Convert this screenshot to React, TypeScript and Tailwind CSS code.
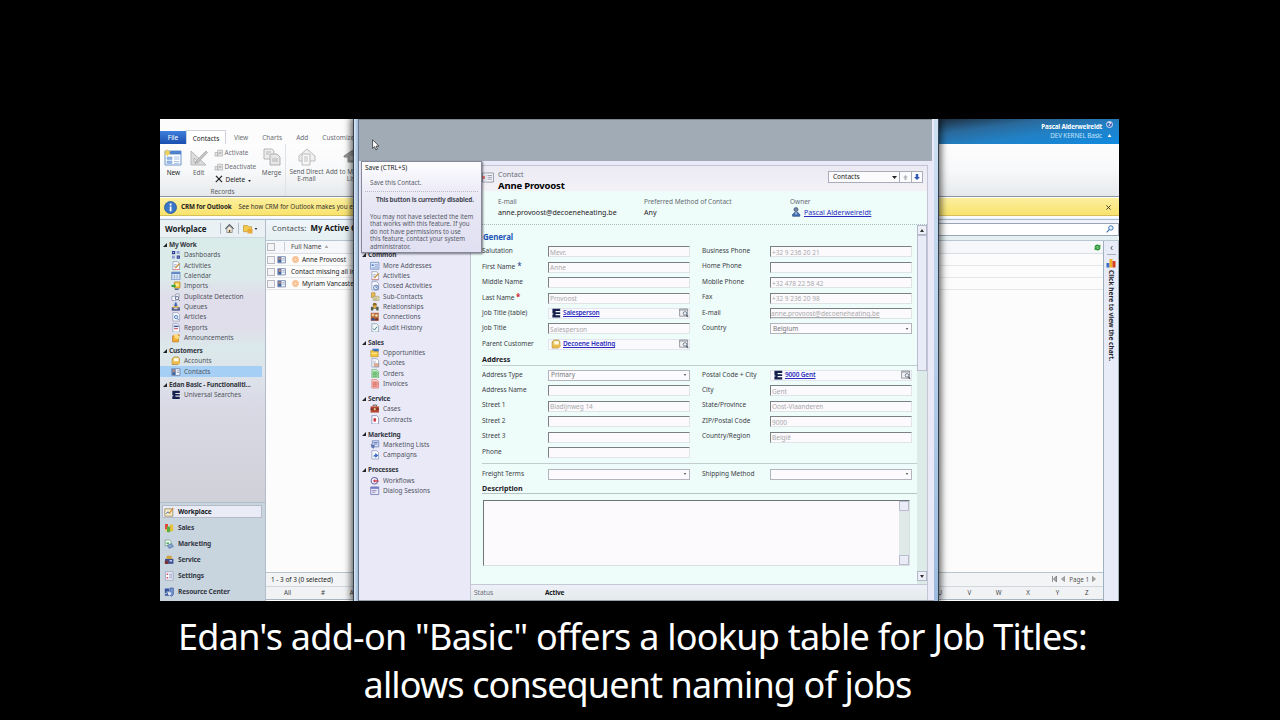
import React from "react";

type Nav = [string, string];

const sheet = (extra: React.ReactNode, fill = "#fdfdff", stroke = "#8090b0") => (
  <>
    <path d="M2 .7h5l2 2v6.8H2z" fill={fill} stroke={stroke} strokeWidth=".7" />
    {extra}
  </>
);

const ICONS: Record<string, React.ReactNode> = {
  dashboards: (
    <>
      <path d="M1 1h3.4v3.4H1zM6 5.8h3.4v3.4H6z" fill="#34439a" />
      <path d="M6 1h3v3H6zM1 6h3v3H1z" fill="#8d9bd8" />
      <path d="M2 2h1v1H2zM7 7h1v1H7z" fill="#fff" />
    </>
  ),
  activities: sheet(
    <>
      <path d="M3 4h3M3 6h2" stroke="#6c7fa5" strokeWidth=".7" />
      <path d="M4.5 7.5L9 2.6" stroke="#c98b2f" strokeWidth="1.3" />
      <path d="M2 9h7" stroke="#d66" strokeWidth=".7" />
    </>
  ),
  calendar: (
    <>
      <path d="M.8 1.2h8.6v8H.8z" fill="#f4f8ff" stroke="#5a7cb8" strokeWidth=".8" />
      <path d="M.8 1.2h8.6v2H.8z" fill="#5c85c6" />
      <path d="M1 5.2h8M1 7.2h8M3.6 3v6M6.4 3v6" stroke="#7e9bcc" strokeWidth=".6" />
    </>
  ),
  imports: (
    <>
      <path d="M3.5 1h6v6.5h-6z" fill="#f2c23c" stroke="#a87716" strokeWidth=".6" />
      <path d="M5 2.5h3v3H5z" fill="#ffe998" />
      <path d="M.5 4.2h2.6V2.8l2.2 2.4L3.1 7.6V6.2H.5z" fill="#3aa43a" />
      <path d="M4 8h4v1.4H4z" fill="#48598d" />
    </>
  ),
  duplicate: (
    <>
      <path d="M1 4.5h4V9H1zM5 2h3.5v4H5z" fill="#f6f7fd" stroke="#7c86a5" strokeWidth=".7" />
      <circle cx="6.4" cy="6.4" r="1.8" fill="#e3ecf8" stroke="#56637f" strokeWidth=".8" />
      <path d="M7.6 7.8L9.4 9.5" stroke="#56637f" />
    </>
  ),
  queues: (
    <>
      <path d="M.8 5.5h8.6v3.7H.8z" fill="#58648c" />
      <path d="M2.2 4h5.6v2H2.2z" fill="#f1c258" />
      <path d="M4 .6h2v2.2h1.4L5 5 2.6 2.8H4z" fill="#3765be" />
      <path d="M3.3 6.5h3.5v1H3.3z" fill="#e3e7f6" />
    </>
  ),
  articles: sheet(
    <>
      <circle cx="5.4" cy="5.3" r="1.8" fill="#cfe4fa" stroke="#3b6bb2" strokeWidth=".8" />
      <path d="M6.6 6.8L8 8.4" stroke="#3b6bb2" />
    </>
  ),
  reports: sheet(
    <>
      <path d="M3 3.5h5" stroke="#4558a8" strokeWidth="1.6" />
      <path d="M3.3 6h4" stroke="#c44458" strokeWidth="1.1" />
    </>
  ),
  announcements: (
    <>
      <path d="M1.6 3h6.8l-.7 6.4H1.6z" fill="#f1ab34" stroke="#b5741a" strokeWidth=".6" />
      <path d="M3 1.2l5.8.5-.7 4.6-4-.6z" fill="#ffdc7a" />
      <path d="M7.6.5l1.9 1.8-1.6 1z" fill="#d4792b" />
    </>
  ),
  accounts: (
    <>
      <path d="M1.2 2.8L3.4 1h4.2l1.2 1.7v5L7 9H1.2z" fill="#f2ce68" stroke="#a27c28" strokeWidth=".7" />
      <path d="M3.4 2.2h4.4v3.2H3.4z" fill="#fffbe6" />
      <path d="M1.5 6h6.2l1.6-1.2v3.4H1.5z" fill="#edba48" />
    </>
  ),
  contacts: (
    <>
      <path d="M.8 1.8h8.6v7H.8z" fill="#f5f8ff" stroke="#60749d" strokeWidth=".8" />
      <path d="M1.3 2.4h3.6v6H1.3z" fill="#41649c" />
      <circle cx="3.1" cy="4.3" r="1.2" fill="#d98c6a" />
      <path d="M6 4h2.6M6 5.8h2.6" stroke="#6e83ae" strokeWidth=".7" />
    </>
  ),
  edan: <path d="M1.4.8h7.8v2.3H4.6v1.2h4.6v1.6H4.6v1.3h4.6v2.3H1.4V6.6h1V5.5h-1z" fill="#16204e" />,
  addresses: (
    <>
      <path d="M.6 1.5h8.8v7.2H.6z" fill="#dbe7fb" stroke="#6e8cc7" strokeWidth=".8" />
      <path d="M1.8 3.5h2v1.8h-2z" fill="#5a7cc6" />
      <path d="M4.8 3.8h3.6M4.8 5.4h3.6M2 7.2h6.3" stroke="#7892c6" strokeWidth=".7" />
    </>
  ),
  closed: sheet(
    <>
      <circle cx="6.2" cy="6.8" r="2.5" fill="#edf3ff" stroke="#31549c" strokeWidth=".8" />
      <path d="M6.2 5.2v1.7h1.4" stroke="#31549c" fill="none" strokeWidth=".7" />
    </>
  ),
  sub: (
    <>
      <path d="M1.5.8h3.8v5H1.5z" fill="#e9bd52" stroke="#a57b29" strokeWidth=".6" />
      <path d="M3.3 4.6h6v4.3h-6z" fill="#f7ebb6" stroke="#8b8b5a" strokeWidth=".6" />
      <path d="M4.4 6.3h3.8M4.4 7.6h3" stroke="#7c7c67" strokeWidth=".6" />
    </>
  ),
  relationships: (
    <>
      <circle cx="5" cy="3" r="2.2" fill="#8c6a2c" />
      <path d="M1 5h8v4H6.6V7H3.4v2H1z" fill="#53604b" />
      <path d="M3.5 3.5h3v3h-3z" fill="#e0ab3d" />
    </>
  ),
  connections: (
    <>
      <path d="M.8.8h8.4v8.4H.8z" fill="#b0683a" />
      <circle cx="3.2" cy="3.2" r="1.5" fill="#f4c79c" />
      <circle cx="6.8" cy="3.8" r="1.5" fill="#f2d7a0" />
      <path d="M1.2 9c0-3.5 3.9-3.5 3.9 0z" fill="#314a8a" />
      <path d="M5.2 9c0-3.3 3.6-3.3 3.6 0z" fill="#703030" />
    </>
  ),
  audit: sheet(<path d="M3.3 5.8l1.4 1.6 2.8-3.6" stroke="#4f7389" strokeWidth="1" fill="none" />, "#eef7f8", "#7b949e"),
  opportunities: (
    <>
      <path d="M2.6.8h6.6v3H2.6z" fill="#3d74c3" />
      <path d="M.8 2.8h3l.8 1h4v5.4H.8z" fill="#f4c73e" stroke="#b8891d" strokeWidth=".6" />
      <path d="M1.6 5h6v1.2h-6z" fill="#ffeb97" />
    </>
  ),
  quotes: sheet(
    <>
      <path d="M3 3.4h3.4M3 5h3" stroke="#999eb0" strokeWidth=".6" />
      <path d="M4.4 6h4.8v3H4.4z" fill="#e7b49b" stroke="#9f7f76" strokeWidth=".6" />
    </>
  ),
  orders: sheet(
    <>
      <path d="M3.2 3h4.4v5.2H3.2z" fill="#9fdca2" stroke="#3d9f48" strokeWidth=".6" />
      <path d="M5.3 3v5M3.2 5.4h4.4" stroke="#3d9f48" strokeWidth=".6" />
    </>,
    "#dcf5dc",
    "#4daa55"
  ),
  invoices: sheet(
    <>
      <path d="M3.2 3h4.4v5.2H3.2z" fill="#f3b0a7" stroke="#d05046" strokeWidth=".6" />
      <path d="M5.3 3v5M3.2 5.4h4.4" stroke="#d05046" strokeWidth=".6" />
    </>,
    "#fde2de",
    "#d6645a"
  ),
  cases: (
    <>
      <path d="M3.3 2.6V1.2h3.6v1.4" stroke="#65493d" fill="none" />
      <path d="M.6 2.6h8.8V9H.6z" fill="#b5452f" />
      <path d="M.6 4.8h8.8v1.3H.6z" fill="#6b2e27" />
      <path d="M4 4.4h2v2H4z" fill="#e9c98c" />
    </>
  ),
  contracts: sheet(<path d="M3.6 3.4h2.8v2.8L5 7.4 3.6 6.2z" fill="#d03a48" />, "#fff", "#7479a8"),
  lists: (
    <>
      <path d="M2.4.8h6.8v6.4H2.4z" fill="#dce4fa" stroke="#536cae" strokeWidth=".7" />
      <path d="M3.6 2.6h4.4M3.6 4.2h4.4" stroke="#4b63a8" strokeWidth=".8" />
      <path d="M.6 4.4l4.6 1.2L4 9.2 1.6 8z" fill="#6577b1" />
    </>
  ),
  campaigns: sheet(<path d="M3 6.6l2.6-2V3.2L9 5.7 5.6 8.4V7z" fill="#3f6fc5" />),
  workflows: (
    <>
      <circle cx="4.6" cy="5" r="3.4" fill="#f5f3ff" stroke="#6a6aa5" strokeWidth="1.1" />
      <path d="M3 5.2l2.4-2v1.2H9v1.6H5.4v1.2z" fill="#cc4251" />
    </>
  ),
  dialogs: (
    <>
      <path d="M.8 1h8.4v8H.8z" fill="#e7eafa" stroke="#6b6ca9" strokeWidth=".8" />
      <path d="M.8 1h8.4v2H.8z" fill="#737cc2" />
      <path d="M2.2 4.8h4.6M2.2 6.6h3.4" stroke="#8f6fa0" strokeWidth=".8" />
    </>
  ),
  workplace: (
    <>
      <path d="M.8 1.8h8v7.4h-8z" fill="#f6ecc8" stroke="#887a4f" strokeWidth=".7" />
      <path d="M2 6.8l2-2 1.4 1.4" stroke="#3e69b4" fill="none" />
      <path d="M5.2 6.6L9.2 1" stroke="#d58c2c" strokeWidth="1.2" />
    </>
  ),
  sales: (
    <>
      <path d="M1 1h3v5.5H1z" fill="#e04b38" />
      <path d="M5.8 1.6h3.4v6.6H5.8z" fill="#eac13a" />
      <path d="M3 3.6h3.2v5.6H3z" fill="#5aab42" />
      <path d="M1 6.5h2v1.8H1z" fill="#f0d560" />
    </>
  ),
  marketing: (
    <>
      <path d="M1.2 1h4.4l1.6 1.8v4H1.2z" fill="#f2fbf4" stroke="#65967c" strokeWidth=".7" />
      <path d="M2.4 3.4h2.8v1.8H2.4z" fill="#57ac66" />
      <path d="M3.4 6.4l4-1.8 2 3-4.2 1.8z" fill="#86a4d4" stroke="#47679b" strokeWidth=".6" />
    </>
  ),
  service: (
    <>
      <path d="M3 .8h4.2l1.6 3.6H2z" fill="#d1a443" />
      <path d="M1 4h8.4v4.8H1z" fill="#3a4f94" />
      <path d="M.8 5.8h3.6V9H.8z" fill="#7b3335" />
      <path d="M5.6 5h2.4v1.6H5.6z" fill="#c6d1f2" />
    </>
  ),
  settings: (
    <>
      <path d="M1.4.8h7.6v8.4H1.4z" fill="#fbfbff" stroke="#8a91b6" strokeWidth=".7" />
      <path d="M2.6 2.4h1.6v1.6H2.6zM2.6 6h1.6v1.6H2.6z" fill="#cf4b5c" />
      <path d="M5.2 3.2h2.8M5.2 5h2.8M5.2 6.8h2.8" stroke="#6e7db2" strokeWidth=".8" />
    </>
  ),
  resource: (
    <>
      <path d="M.8 1.4h4.4v3.2H2.6v1.2h2.6v3H.8V7.2h2.4v-1H.8z" fill="#35549e" />
      <path d="M6 1h3.4v6.4L7.6 9.4 5.8 8z" fill="#7393cf" stroke="#2f4f95" strokeWidth=".6" />
      <path d="M4 5.4h3v2.4H4z" fill="#e5eefc" />
    </>
  ),
  star: (
    <>
      <circle cx="5" cy="5" r="3.8" fill="#f9c79c" />
      <circle cx="5" cy="5" r="1.8" fill="#fde3c8" stroke="#efa873" strokeWidth=".7" />
    </>
  ),
  person: (
    <>
      <circle cx="5" cy="2.6" r="2" fill="#6f87a8" stroke="#33486b" strokeWidth=".7" />
      <path d="M1.6 9.2V7.4l2-1.9h3.2l2 1.9v1.8z" fill="#4473b8" stroke="#26457c" strokeWidth=".7" />
      <path d="M4.3 5.5h1.5L5 8z" fill="#fff" />
    </>
  ),
  lookup: (
    <>
      <path d="M.6 1h8v7.2h-8z" fill="#f1f1f4" stroke="#80858f" strokeWidth=".8" />
      <path d="M.6 2h8" stroke="#80858f" strokeWidth=".8" />
      <circle cx="6" cy="5.4" r="1.8" fill="#e8f0fb" stroke="#666c7a" strokeWidth=".8" />
      <path d="M7.2 6.8l2 2.2" stroke="#444b5c" strokeWidth="1.1" />
    </>
  ),
};

function Icon({ name, size = 10 }: { name: string; size?: number }) {
  return (
    <svg viewBox="0 0 10 10" width={size} height={size} className="shrink-0">
      {ICONS[name]}
    </svg>
  );
}

function Twisty() {
  return (
    <svg viewBox="0 0 5 5" className="mr-[2px] h-[4px] w-[4px] shrink-0">
      <path d="M5 0v5H0z" fill="#222" />
    </svg>
  );
}

function Group({ title, items, selected, className = "" }: { title: string; items: Nav[]; selected?: string; className?: string }) {
  return (
    <div className={className}>
      <div className="flex h-[10.35px] items-center pl-[3px] text-[6.5px] font-bold tracking-[-0.16px] text-[#33363f]">
        <Twisty />
        {title}
      </div>
      {items.map(([icon, label]) => (
        <div
          key={label}
          className={
            label === selected
              ? "mr-[3px] flex h-[10.35px] items-center gap-[3.5px] bg-[#a6cff5] pl-[11px]"
              : "flex h-[10.35px] items-center gap-[3.5px] pl-[11px]"
          }
        >
          <Icon name={icon} size={9.5} />
          <span>{label}</span>
        </div>
      ))}
    </div>
  );
}

const WORK: Nav[] = [
  ["dashboards", "Dashboards"],
  ["activities", "Activities"],
  ["calendar", "Calendar"],
  ["imports", "Imports"],
  ["duplicate", "Duplicate Detection"],
  ["queues", "Queues"],
  ["articles", "Articles"],
  ["reports", "Reports"],
  ["announcements", "Announcements"],
];

const AREAS: Nav[] = [
  ["workplace", "Workplace"],
  ["sales", "Sales"],
  ["marketing", "Marketing"],
  ["service", "Service"],
  ["settings", "Settings"],
  ["resource", "Resource Center"],
];

function Ribbon() {
  return (
    <div className="flex h-[53px] shrink-0 border-b border-[#8e949c] bg-linear-to-b from-[#fdfdfe] via-[#f8f9fa] to-[#e6e9ec] text-center text-[6.4px] leading-[7px] text-[#5a5d63]">
      <div className="flex w-[126px] flex-col border-r border-[#e0e3e6]">
        <div className="flex h-[43px]">
          <div className="flex w-[27px] flex-col items-center pt-[5px]">
            <svg viewBox="0 0 18 18" className="mb-[2px] h-[18px] w-[18px]">
              <path d="M1 2h16v14H1z" fill="#fff" stroke="#6d94c9" />
              <path d="M1 2h16v3.4H1z" fill="#4d83cc" />
              <path d="M3 8h5v2.4H3zM3 12h5v2.4H3zM10 8h5.4M10 10h5.4M10 12.6h5.4M10 14.4h5.4" fill="#8fb3e3" stroke="#8fb3e3" strokeWidth=".8" />
              <path d="M3.4 0l1 2.3 2.4-.5-1.4 2 1.4 2-2.4-.4-1 2.3-1-2.3L0 5.8l1.4-2L0 1.8l2.4.5z" fill="#f2d359" />
            </svg>
            <span className="text-[#222]">New</span>
          </div>
          <div className="flex w-[24px] flex-col items-center pt-[5px]">
            <svg viewBox="0 0 18 18" className="mb-[2px] h-[18px] w-[18px]">
              <path d="M1 2v14h15z" fill="#dcdcdc" stroke="#b8b8b8" />
              <path d="M4 9v4h4z" fill="#f6f6f6" stroke="#aaa" strokeWidth=".8" />
              <path d="M6 12L16 2l1.500 1.500L8 13.600l-3 .8z" fill="#c4c4c4" stroke="#a2a2a2" strokeWidth=".7" />
            </svg>
            Edit
          </div>
          <div className="flex w-[48px] flex-col pt-[2px] pl-[3px]">
            {["Activate", "Deactivate"].map((label) => (
              <div key={label} className="flex h-[13.500px] items-center gap-[1px] text-[#6d7076]">
                <svg viewBox="0 0 10 10" className="h-[9px] w-[10px] shrink-0">
                  <path d="M.6 5h3v4h-3zM3.500 2.500h5.500v6.500H3.500z" fill="#e4e4e4" stroke="#a9a9a9" strokeWidth=".7" />
                  <path d="M5 4.500h2.600v2H5z" fill="#b8b8b8" />
                </svg>
                {label}
              </div>
            ))}
            <div className="flex h-[12px] items-center gap-[3px] pl-[1px] text-[#222]">
              <svg viewBox="0 0 8 8" className="h-[8px] w-[8px] shrink-0">
                <path d="M1 .8l6 6.400M7 .8L.8 7.200" stroke="#222" strokeWidth="1.200" />
              </svg>
              Delete
              <svg viewBox="0 0 4 3" className="mt-[3px] h-[2px] w-[3px] shrink-0">
                <path d="M0 0h4L2 3z" fill="#222" />
              </svg>
            </div>
          </div>
          <div className="flex w-[27px] flex-col items-center pt-[4px]">
            <svg viewBox="0 0 18 18" className="mb-[3px] h-[18px] w-[18px]">
              <path d="M1 1h8l2 2v8H1z" fill="#eee" stroke="#b5b5b5" />
              <path d="M7 6h7l3 3v8H7z" fill="#e6e6e6" stroke="#b0b0b0" />
              <path d="M9 11h6M9 13h6M3 4h5M3 6h3" stroke="#b5b5b5" />
            </svg>
            Merge
          </div>
        </div>
        <div className="h-[9px] leading-[9px]">Records</div>
      </div>
      <div className="flex w-[41px] flex-col items-center pt-[4px]">
        <svg viewBox="0 0 18 18" className="mb-[2px] h-[18px] w-[18px]">
          <path d="M1 8l8-7 8 7v5H1z" fill="#f0f0f0" stroke="#bcbcbc" />
          <path d="M4 6h8v11H4z" fill="#f7f7f7" stroke="#bcbcbc" />
          <path d="M6 9h4M6 11h4M6 13h4" stroke="#c0c0c0" />
        </svg>
        <span className="tracking-[-0.06px] whitespace-nowrap">Send Direct</span>
        <span>E-mail</span>
      </div>
      <div className="flex w-[50px] flex-col items-center pt-[4px]">
        <svg viewBox="0 0 18 18" className="mb-[2px] h-[18px] w-[18px]">
          <path d="M1 8l9-6 7 4v8H5V9H1z" fill="#999" stroke="#888" />
          <path d="M7 9h7M7 11h7" stroke="#ddd" />
        </svg>
        <span className="whitespace-nowrap">Add to Marketing</span>
        <span>List</span>
      </div>
    </div>
  );
}

function Backdrop() {
  return (
    <div className="flex h-[482px] w-[959px] flex-col bg-[#fcfcfd]">
      <div className="flex h-[25px] shrink-0 items-end justify-between bg-[#fcfcfd]">
        <div className="flex h-[14px] items-end text-[6.500px] text-[#6a6d73]">
          <div className="flex h-[13px] w-[26px] items-center justify-center bg-linear-to-b from-[#3f7fdd] to-[#1a4fae] pt-px text-white">File</div>
          <div className="flex h-[14px] w-[40px] items-center justify-center border border-b-0 border-[#cfd4da] bg-white pt-[2px] text-[#222]">Contacts</div>
          <div className="flex h-[13px] items-center gap-[14px] pt-px pl-[8px] whitespace-nowrap">
            <span>View</span>
            <span>Charts</span>
            <span>Add</span>
            <span>Customize</span>
          </div>
        </div>
        <div className="flex h-[25px] w-[190px] items-start justify-end gap-[4px] bg-[linear-gradient(172deg,#1c2a38_0%,#2a6a9c_32%,#2181c6_60%,#118ae0_100%)] pt-[4px] pr-[6px] text-right text-[6.300px] leading-[8.500px] text-white">
          <div>
            <div className="font-bold tracking-[-0.180px]">Pascal Alderweireldt</div>
            <div className="tracking-[-0.100px] text-[#c6e4fa]">DEV KERNEL Basic</div>
          </div>
          <div className="-mt-[2px] flex flex-col items-center gap-[5px]">
            <div className="flex h-[7px] w-[7px] items-center justify-center rounded-full border border-[#d5e6ff] bg-[#3462b8] text-[6px] leading-[5px] font-bold">?</div>
            <svg viewBox="0 0 5 4" className="mt-[1px] h-[3px] w-[5px]">
              <path d="M0 4l2.500-4L5 4z" fill="#fff" />
            </svg>
          </div>
        </div>
      </div>
      <Ribbon />
      <div className="mt-[1px] flex h-[18px] shrink-0 items-center border-b border-[#d3bf5c] bg-linear-to-b from-[#fcef9e] to-[#f9e36c] pt-px pr-[8px] pl-[4px] text-[6.300px] text-[#333]">
        <svg viewBox="0 0 13 13" className="mr-[4px] h-[13px] w-[13px]">
          <circle cx="6.500" cy="6.500" r="6" fill="#3b76c6" stroke="#2555a0" strokeWidth=".8" />
          <path d="M5.700 5.400h1.800v4.800H5.700zM5.700 2.600h1.800v1.800H5.700z" fill="#fff" />
        </svg>
        <b className="mr-[7px] tracking-[-0.100px] text-[#222]">CRM for Outlook</b>
        <span className="flex-1 whitespace-nowrap">See how CRM for Outlook makes you even more productive.</span>
        <svg viewBox="0 0 6 6" className="h-[5px] w-[5px]">
          <path d="M.5.5l5 5M5.500.5l-5 5" stroke="#333" strokeWidth="1.100" />
        </svg>
      </div>
      <div className="mt-[2px] h-[2px] shrink-0 border-b border-[#a9bbd0] bg-[#eef1f8]" />
      <div className="flex min-h-0 flex-1">
        <div className="flex w-[106px] shrink-0 flex-col border-r border-[#b3bccb] bg-[#d3d3de]">
          <div className="flex h-[17px] shrink-0 items-center justify-between bg-[#e9f1f5] pr-[7px] pl-[5px] text-[8px] font-bold text-[#1c1f26]">
            <span className="leading-none tracking-[-0.100px]">Workplace</span>
            <div className="flex h-[10px] items-center gap-[4px]">
              <i className="h-[11px] w-px bg-[#b5bdc8]" />
              <svg viewBox="0 0 10 10" className="h-[9px] w-[9px]">
                <path d="M.5 5.500L5 .8l4.500 4.700" fill="none" stroke="#4b4b55" strokeWidth="1.200" />
                <path d="M2 5.200v4.300h6V5.200L5 2.200z" fill="#f4efe2" stroke="#666" strokeWidth=".7" />
                <path d="M4.200 6.500h1.700v3H4.200z" fill="#71531f" />
              </svg>
              <i className="h-[11px] w-px bg-[#b5bdc8]" />
              <div className="flex items-center gap-[1px]">
                <svg viewBox="0 0 10 10" className="h-[10px] w-[10px]">
                  <path d="M.5 1.500h4l1 1.200h3v5h-8z" fill="#f3c94c" stroke="#b98c22" strokeWidth=".6" />
                  <path d="M4.500 5h5v4.500h-5z" fill="#e8a83a" />
                </svg>
                <svg viewBox="0 0 4 3" className="h-[2px] w-[4px]">
                  <path d="M0 0h4L2 3z" fill="#333" />
                </svg>
              </div>
            </div>
          </div>
          <div className="flex-1 border-t border-[#cfd9e0] bg-[linear-gradient(to_bottom,#d9ebe8_0%,#dcebea_14%,#e0deea_22%,#dfdeea_34%,#dbe9ea_42%,#dde2ea_54%,#dadae6_62%,#d0d0d9_100%)] text-[6.450px] text-[#50545e]">
            <Group className="pt-[1.500px]" title="My Work" items={WORK} />
            <Group className="pt-[2.600px]" title="Customers" selected="Contacts" items={[["accounts", "Accounts"], ["contacts", "Contacts"]]} />
            <Group className="pt-[3px]" title="Edan Basic - Functionaliti..." items={[["edan", "Universal Searches"]]} />
          </div>
          <div className="h-[99px] shrink-0 border-t border-[#b2bdca] bg-[#c8d4de] pt-[2px] pl-[2px] text-[6.550px] font-bold tracking-[-0.120px] text-[#333843]">
            {AREAS.map(([icon, label], i) => (
              <div
                key={label}
                className={
                  i === 0
                    ? "mr-[3px] flex h-[13px] items-center gap-[4px] border border-[#b5bac8] bg-[#e9ecf6] pl-[1px] text-[#16181d]"
                    : "mt-[3px] flex h-[13.100px] items-center gap-[4px] pl-[2px]"
                }
              >
                <Icon name={icon} />
                {label}
              </div>
            ))}
          </div>
        </div>
        <div className="flex min-w-0 flex-1 flex-col">
          <div className="flex h-[21px] shrink-0 items-center justify-between border-b border-[#b6c6d3] bg-linear-to-b from-[#f0f5fa] to-[#e4f0f2] pb-[2px] pl-[6px] text-[7.900px] text-[#4b5058]">
            <div className="whitespace-nowrap">
              Contacts: <b className="ml-[2px] text-[#111]">My Active Contacts</b>
            </div>
            <div className="flex h-[13px] w-[230px] items-center justify-end border border-[#9aa6b8] bg-white pr-[4px]">
              <svg viewBox="0 0 9 9" className="h-[8px] w-[8px]">
                <circle cx="5.500" cy="3.300" r="2.500" fill="#e9f3ff" stroke="#3a76ae" strokeWidth="1.100" />
                <path d="M3.700 5.200L.7 8.300" stroke="#3a76ae" strokeWidth="1.400" />
              </svg>
            </div>
          </div>
          <div className="flex min-h-0 flex-1">
            <div className="flex min-w-0 flex-1 flex-col text-[6.450px] text-[#222]">
              <div className="flex h-[13px] shrink-0 items-center justify-between border-b border-[#d9dde4] bg-[#f6f7fa] pr-[2px] pl-[1px] text-[#444]">
                <div className="flex items-center">
                  <i className="h-[8px] w-[8px] border border-[#b6b9c0] bg-[#f4f4f6]" />
                  <i className="mr-[6px] ml-[9px] h-[9px] w-px bg-[#c9cdd5]" />
                  Full Name
                  <svg viewBox="0 0 5 4" className="ml-[3px] h-[3px] w-[5px]">
                    <path d="M0 4l2.500-4L5 4z" fill="#aaa" />
                  </svg>
                </div>
                <svg viewBox="0 0 8 8" className="h-[7px] w-[7px]">
                  <path d="M1 3.500C1 .5 5 .3 6 2l1-1v3H4l1-1C4 2 2.500 2.500 2.500 3.500zM7 4.500C7 7.500 3 7.700 2 6L1 7V4h3L3 5c1 1 2.500.5 2.500-.5z" fill="#25962f" stroke="#25962f" strokeWidth=".5" />
                </svg>
              </div>
              {[
                ["Anne Provoost", 1],
                ["Contact missing all info", 0],
                ["Myriam Vancaster", 1],
              ].map(([name, starred]) => (
                <div key={name} className="flex h-[12.100px] shrink-0 items-center border-b border-[#e4e6ea] pl-[1px] whitespace-nowrap">
                  <i className="mr-[2px] h-[8px] w-[8px] border border-[#b6b9c0] bg-[#f4f4f6]" />
                  <Icon name="contacts" size={9} />
                  <span className="ml-[5px] flex items-center gap-[2px]">
                    {starred ? <Icon name="star" size={9} /> : null}
                    {name}
                  </span>
                </div>
              ))}
              <div className="flex-1" />
              <div className="flex h-[14px] shrink-0 items-center justify-between border-t border-[#b9c3cc] bg-[#f3f4f6] pr-[7px] pl-[5px]">
                <span>1 - 3 of 3 (0 selected)</span>
                <span className="flex items-center gap-[4px] text-[6.200px] text-[#555]">
                  <svg viewBox="0 0 5 6" className="h-[6px] w-[5px]">
                    <path d="M.5 0v6M4.500 0v6L1.500 3z" fill="#aaa" stroke="#777" strokeWidth=".8" />
                  </svg>
                  <svg viewBox="0 0 4 6" className="h-[6px] w-[4px]">
                    <path d="M3.500.5v5L.5 3z" fill="#aaa" stroke="#777" strokeWidth=".6" />
                  </svg>
                  Page 1
                  <svg viewBox="0 0 4 6" className="-ml-[1px] h-[6px] w-[4px]">
                    <path d="M.5.5v5L3.500 3z" fill="#aaa" stroke="#777" strokeWidth=".6" />
                  </svg>
                </span>
              </div>
              <div className="grid h-[13px] shrink-0 grid-cols-[43px_28px_repeat(26,29.420px)] items-center border-t border-[#d2d7dd] bg-[#f0f2f4] text-center text-[6.200px] text-[#444]">
                {["All", "#", ..."ABCDEFGHIJKLMNOPQRSTUVWXYZ"].map((c) => (
                  <span key={c}>{c}</span>
                ))}
              </div>
              <div className="h-[2px] shrink-0 border-t border-[#aab4bf] bg-white" />
            </div>
            <div className="flex w-[16px] shrink-0 flex-col items-center border-x border-[#9fb0bf] bg-[#e8ebf8] pt-[5px]">
              <svg viewBox="0 0 4 6" className="h-[4px] w-[3px]">
                <path d="M3.500 0L1 3l2.500 3" stroke="#333" strokeWidth="1.200" fill="none" />
              </svg>
              <i className="mt-[4px] h-px w-[9px] bg-[#a7adbb]" />
              <svg viewBox="0 0 10 10" className="mt-[3px] h-[10px] w-[10px]">
                <path d="M.5 5h3v4.500h-3z" fill="#3a6ecb" />
                <path d="M3.500 1h3v8.500h-3z" fill="#f0ae24" />
                <path d="M6.500 3h3v6.500h-3z" fill="#d43e25" />
              </svg>
              <span className="mt-[2px] text-[6.600px] leading-[9px] font-bold tracking-[-0.020px] whitespace-nowrap text-[#26282e] [writing-mode:vertical-rl]">
                Click here to view the chart.
              </span>
            </div>
          </div>
        </div>
      </div>
    </div>
  );
}

type Field = { label: string; kind?: "text" | "select" | "lookup" | "mail" | "none"; value?: string; icon?: string; mark?: string };

function Cell({ label, kind = "text", value, icon, mark, wide }: Field & { wide?: boolean }) {
  return (
    <div className="flex items-center">
      <div className={wide ? "w-[68px] pb-[1.500px] leading-[10px]" : "w-[66px] pb-[1.500px] leading-[10px]"}>
        {label}
        {mark ? <span className={mark}>*</span> : null}
      </div>
      {kind === "text" || kind === "mail" ? (
        <div className="flex h-[11px] w-[141.500px] items-center overflow-hidden border border-t-[#7b8084] border-r-[#dfe5e7] border-b-[#dfe5e7] border-l-[#7b8084] bg-[#fcfafc] pt-[2px] pl-px text-[6.500px] leading-[8px] text-[#a9a9ac]">
          <span className={kind === "mail" ? "-ml-px underline" : ""}>{value}</span>
        </div>
      ) : null}
      {kind === "select" ? (
        <div className="flex h-[11px] w-[142px] items-center justify-between border border-[#b2b5bb] bg-[#fcfafc] pr-[2px] pl-[2px] text-[6.500px] text-[#76787d]">
          <span>{value}</span>
          <svg viewBox="0 0 4 3" className="h-[2px] w-[4px]">
            <path d="M0 0h4L2 3z" fill="#666" />
          </svg>
        </div>
      ) : null}
      {kind === "lookup" ? (
        <div className="flex h-[11px] w-[142px] items-center border border-[#e2e5ee] bg-[#fafafd] pl-[2px] text-[6.500px] font-semibold tracking-[-0.160px] text-[#2c2cc0]">
          <Icon name={icon ?? "edan"} />
          <span className="ml-[2px] flex-1 leading-[8px] underline">{value}</span>
          <Icon name="lookup" />
        </div>
      ) : null}
    </div>
  );
}

function Pair({ left, right }: { left: Field; right?: Field }) {
  return (
    <div className="grid h-[15.450px] grid-cols-[220px_1fr] items-center">
      <Cell {...left} />
      {right ? <Cell {...right} wide /> : null}
    </div>
  );
}

const GENERAL: [Field, Field?][] = [
  [{ label: "Salutation", value: "Mevr." }, { label: "Business Phone", value: "+32 9 236 20 21" }],
  [{ label: "First Name", value: "Anne", mark: "ml-[2px] text-[8px] text-[#2a3a8a]" }, { label: "Home Phone" }],
  [{ label: "Middle Name" }, { label: "Mobile Phone", value: "+32 478 22 58 42" }],
  [{ label: "Last Name", value: "Provoost", mark: "ml-[1.5px] text-[8px] font-bold text-[#d0202a]" }, { label: "Fax", value: "+32 9 236 20 98" }],
  [{ label: "Job Title (table)", kind: "lookup", value: "Salesperson" }, { label: "E-mail", kind: "mail", value: "anne.provoost@decoeneheating.be" }],
  [{ label: "Job Title", value: "Salesperson" }, { label: "Country", kind: "select", value: "Belgium" }],
  [{ label: "Parent Customer", kind: "lookup", icon: "accounts", value: "Decoene Heating" }],
];

const ADDRESS: [Field, Field?][] = [
  [{ label: "Address Type", kind: "select", value: "Primary" }, { label: "Postal Code + City", kind: "lookup", value: "9000 Gent" }],
  [{ label: "Address Name" }, { label: "City", value: "Gent" }],
  [{ label: "Street 1", value: "Bladijnweg 14" }, { label: "State/Province", value: "Oost-Vlaanderen" }],
  [{ label: "Street 2" }, { label: "ZIP/Postal Code", value: "9000" }],
  [{ label: "Street 3" }, { label: "Country/Region", value: "België" }],
  [{ label: "Phone" }],
];

function Arrow({ down }: { down?: boolean }) {
  return (
    <div className="flex h-[10px] w-[10px] shrink-0 items-center justify-center border border-[#b4b8c8] bg-[#eceef8]">
      <svg viewBox="0 0 4 3" className="h-[3px] w-[4px]">
        <path d={down ? "M0 0h4L2 3z" : "M0 3h4L2 0z"} fill="#333" />
      </svg>
    </div>
  );
}

function ContactForm() {
  return (
    <div className="mt-[4px] flex h-[435px] w-[458px] shrink-0 flex-col border border-b-0 border-[#c3c5d6] bg-[#eefcfa] text-[6.500px] text-[#3c4046]">
      <div className="flex h-[25px] shrink-0 justify-between bg-linear-to-b from-[#ebeaf4] to-[#f4f1f6] pt-[4px] pr-[4px] pl-[11px]">
        <div className="flex">
          <svg viewBox="0 0 12 11" className="mt-[2px] mr-[4px] h-[11px] w-[12px]">
            <path d="M.6 1h10.800v9H.6z" fill="#fbfbfd" stroke="#8a8f9d" strokeWidth=".9" />
            <path d="M1.200 1.600h4v7.800h-4z" fill="#dfe3ee" />
            <path d="M0 4h3v3H0z" fill="#d77" />
            <path d="M5.500 3.500H10M5.500 5.300H10M5.500 7.200H10" stroke="#8087a0" strokeWidth=".8" />
          </svg>
          <div className="leading-[9px]">
            <div className="text-[7.100px] text-[#6a6d78]">Contact</div>
            <div className="mt-[1.500px] text-[9.500px] font-bold tracking-[-0.180px] text-black">Anne Provoost</div>
          </div>
        </div>
        <div className="mt-px flex h-[12px] border border-[#a9adb9] bg-[#fbfbfd] text-[6.500px] text-[#222]">
          <div className="flex w-[70px] items-center justify-between pr-[2px] pl-[4px]">
            Contacts
            <svg viewBox="0 0 5 3" className="h-[3px] w-[5px]">
              <path d="M0 0h5L2.500 3z" fill="#222" />
            </svg>
          </div>
          <div className="flex w-[12px] items-center justify-center border-l border-[#a9adb9]">
            <svg viewBox="0 0 6 6" className="h-[5px] w-[5px]">
              <path d="M3 0l3 3H4.200v3H1.800V3H0z" fill="#b6b8be" />
            </svg>
          </div>
          <div className="flex w-[11px] items-center justify-center border-l border-[#a9adb9]">
            <svg viewBox="0 0 6 6" className="h-[6px] w-[6px]">
              <path d="M3 6l3-3H4.200V0H1.800v3H0z" fill="#2f55b5" />
            </svg>
          </div>
        </div>
      </div>
      <div className="grid h-[34px] shrink-0 grid-cols-[146px_146px_1fr] border-b border-dotted border-[#a9bcc0] pt-[6px] pl-[27px] leading-[10px]">
        <div>
          <div className="text-[#666b72]">E-mail</div>
          <div className="text-[7.100px] text-[#1e2126]">anne.provoost@decoeneheating.be</div>
        </div>
        <div>
          <div className="whitespace-nowrap text-[#666b72]">Preferred Method of Contact</div>
          <div className="text-[7.100px] text-[#1e2126]">Any</div>
        </div>
        <div>
          <div className="text-[#666b72]">Owner</div>
          <div className="flex items-center gap-[3px] pl-[1px] text-[7.100px] text-[#2c2cc0]">
            <Icon name="person" />
            <span className="underline">Pascal Alderweireldt</span>
          </div>
        </div>
      </div>
      <div className="flex min-h-0 flex-1">
        <div className="flex-1 pt-[5px] pl-[11px]">
          <div className="h-[14px] pl-px text-[7.900px] leading-[14px] font-bold tracking-[-0.100px] text-[#1c55b8]">General</div>
          {GENERAL.map(([l, r]) => (
            <Pair key={l.label} left={l} right={r} />
          ))}
          <div className="h-[14px] border-b border-[#c3cdd0] text-[7.100px] leading-[14px] font-bold text-[#1e2126]">Address</div>
          <div className="pt-[1.500px]">
            {ADDRESS.map(([l, r]) => (
              <Pair key={l.label} left={l} right={r} />
            ))}
          </div>
          <div className="mt-[3px] border-t border-[#c3cdd0] pt-[2.500px]">
            <Pair left={{ label: "Freight Terms", kind: "select" }} right={{ label: "Shipping Method", kind: "select" }} />
          </div>
          <div className="h-[12px] border-b border-[#b9c3c6] text-[7.100px] leading-[12px] font-bold text-[#1e2126]">Description</div>
          <div className="mt-[6px] ml-px flex h-[66px] w-[427px] justify-end border border-t-[#6f7478] border-r-[#d7dfe1] border-b-[#d7dfe1] border-l-[#6f7478] bg-[#fcfafc]">
            <div className="flex w-[10px] flex-col justify-between bg-[#dfe9e8]">
              <i className="h-[10px] border border-[#b9bdcd] bg-[#e9ebf6]" />
              <i className="h-[10px] border border-[#b9bdcd] bg-[#e9ebf6]" />
            </div>
          </div>
        </div>
        <div className="flex w-[10px] shrink-0 flex-col bg-[#dcebe8] pb-[3px]">
          <Arrow />
          <div className="h-[136px] shrink-0 border border-[#b9bdd0] bg-[#e9ebf7]" />
          <div className="flex-1" />
          <Arrow down />
        </div>
      </div>
      <div className="flex h-[16px] shrink-0 items-center border-t border-[#c5c9d4] bg-linear-to-b from-[#eef0f8] to-[#e4ebeb] pl-[3px] text-[#666b72]">
        <span className="w-[71px]">Status</span>
        <b className="tracking-[-0.150px] text-[#16181c]">Active</b>
      </div>
    </div>
  );
}

function ContactWindow() {
  return (
    <div className="absolute top-0 left-[193px] flex h-[482px] w-[586px] border-r border-l border-[#33404f] bg-[#b6cdea] shadow-[0_0_7px_2px_rgba(0,0,0,0.65)]">
      <div className="w-[5px] shrink-0 border-r border-[#65788f] bg-linear-to-r from-[#dce8f5] to-[#9fbbd8]" />
      <div className="flex w-[575px] shrink-0 flex-col bg-[#e9e9f7]">
        <div className="h-[42px] w-[573px] shrink-0 border-t border-[#7f8994] bg-[#a1abb5]" />
        <div className="flex min-h-0 flex-1">
          <div className="w-[111px] shrink-0 pt-[89px] text-[6.450px] text-[#50545f]">
            <Group
              title="Common"
              items={[
                ["addresses", "More Addresses"],
                ["activities", "Activities"],
                ["closed", "Closed Activities"],
                ["sub", "Sub-Contacts"],
                ["relationships", "Relationships"],
                ["connections", "Connections"],
                ["audit", "Audit History"],
              ]}
            />
            <Group
              className="pt-[4.600px]"
              title="Sales"
              items={[
                ["opportunities", "Opportunities"],
                ["quotes", "Quotes"],
                ["orders", "Orders"],
                ["invoices", "Invoices"],
              ]}
            />
            <Group className="pt-[4.600px]" title="Service" items={[["cases", "Cases"], ["contracts", "Contracts"]]} />
            <Group className="pt-[4.600px]" title="Marketing" items={[["lists", "Marketing Lists"], ["campaigns", "Campaigns"]]} />
            <Group className="pt-[4.600px]" title="Processes" items={[["workflows", "Workflows"], ["dialogs", "Dialog Sessions"]]} />
          </div>
          <ContactForm />
        </div>
        <div className="h-px shrink-0 bg-[#9aa0aa]" />
      </div>
      <div className="flex-1 bg-linear-to-b from-[#cfe0f2] to-[#9dbcdf]" />
    </div>
  );
}

function SaveTooltip() {
  return (
    <div className="absolute top-[42px] left-[201px] h-[92px] w-[121px] border border-[#85879a] bg-linear-to-b from-[#fdfdff] via-[#e9e8f5] via-40% to-[#e0e0f2] text-[6.200px] leading-[7.400px] text-[#575a66] shadow-[1px_1px_2px_rgba(0,0,0,0.5)]">
      <div className="h-[12px] pl-[3px] text-[6.500px] leading-[11px] whitespace-nowrap text-[#222]">Save (CTRL+S)</div>
      <div className="mx-[3px] h-[18px] border-b border-dotted border-[#b6b8c6] pl-[5px] leading-[18px]">Save this Contact.</div>
      <div className="h-[17px] pl-[14px] text-[6.400px] leading-[16px] font-bold tracking-[-0.200px] whitespace-nowrap text-[#4a4d5a]">This button is currently disabled.</div>
      <div className="pt-[4px] pl-[8px] whitespace-nowrap">
        <div>You may not have selected the item</div>
        <div>that works with this feature. If you</div>
        <div>do not have permissions to use</div>
        <div>this feature, contact your system</div>
        <div>administrator.</div>
      </div>
    </div>
  );
}

export default function App() {
  return (
    <div className="flex h-[720px] w-[1280px] flex-col items-center overflow-hidden bg-black pt-[119px] font-['Noto_Sans','Open_Sans',sans-serif]">
      <div className="relative h-[482px] w-[960px] shrink-0 overflow-hidden">
        <Backdrop />
        <ContactWindow />
        <SaveTooltip />
        <svg viewBox="0 0 8 12" className="absolute top-[20px] left-[212px] h-[12px] w-[8px]">
          <path d="M.6.8v8.600l2-1.800 1.300 3.200 1.500-.6-1.300-3.100h2.900z" fill="#fff" stroke="#333" strokeWidth=".8" />
        </svg>
      </div>
      <div className="mt-[12px] w-[960px] text-center text-[36px] leading-[48px] whitespace-nowrap text-white">
        <div className="pr-[15px] tracking-[-0.740px]">Edan's add-on "Basic" offers a lookup table for Job Titles:</div>
        <div className="pr-[5px] tracking-[-0.880px]">allows consequent naming of jobs</div>
      </div>
    </div>
  );
}
